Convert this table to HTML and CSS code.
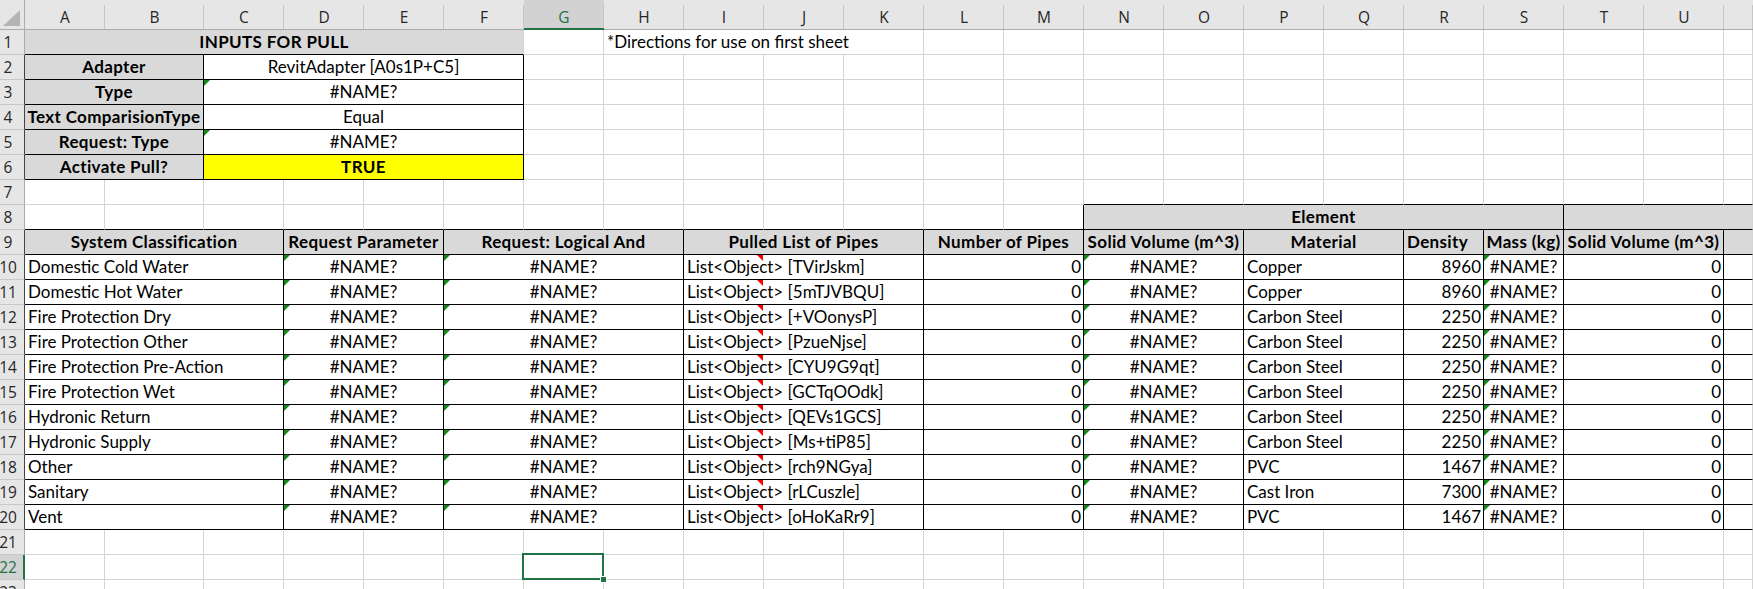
FILE: index.html
```html
<!DOCTYPE html>
<html>
<head>
<meta charset="utf-8">
<title>Sheet</title>
<link rel="stylesheet" href="styles.css">
</head>
<body>
<div class="sheet">
<!-- column headers -->
<div class="corner"></div>
<div class="ch">A</div><div class="ch">B</div><div class="ch">C</div><div class="ch">D</div><div class="ch">E</div><div class="ch">F</div><div class="ch act">G</div><div class="ch">H</div><div class="ch">I</div><div class="ch">J</div><div class="ch">K</div><div class="ch">L</div><div class="ch">M</div><div class="ch">N</div><div class="ch">O</div><div class="ch">P</div><div class="ch">Q</div><div class="ch">R</div><div class="ch">S</div><div class="ch">T</div><div class="ch">U</div><div class="ch"></div>
<!-- row 1 -->
<div class="rh">1</div>
<div class="s6 hd b bb">INPUTS FOR PULL</div>
<div></div>
<div class="s4 l">*Directions for use on first sheet</div>
<div></div><div></div><div></div><div></div><div></div><div></div><div></div><div></div><div></div><div></div>
<div></div>
<!-- row 2 -->
<div class="rh tb">2</div>
<div class="s2 hd b bk">Adapter</div>
<div class="s4 bk">RevitAdapter [A0s1P+C5]</div>
<div></div><div></div><div></div><div></div><div></div><div></div><div></div><div></div><div></div><div></div><div></div><div></div><div></div><div></div><div></div>
<div></div>
<!-- row 3 -->
<div class="rh tb">3</div>
<div class="s2 hd b bk">Type</div>
<div class="s4 bk err">#NAME?</div>
<div></div><div></div><div></div><div></div><div></div><div></div><div></div><div></div><div></div><div></div><div></div><div></div><div></div><div></div><div></div>
<div></div>
<!-- row 4 -->
<div class="rh tb">4</div>
<div class="s2 hd b bk">Text ComparisionType</div>
<div class="s4 bk">Equal</div>
<div></div><div></div><div></div><div></div><div></div><div></div><div></div><div></div><div></div><div></div><div></div><div></div><div></div><div></div><div></div>
<div></div>
<!-- row 5 -->
<div class="rh tb">5</div>
<div class="s2 hd b bk">Request: Type</div>
<div class="s4 bk err">#NAME?</div>
<div></div><div></div><div></div><div></div><div></div><div></div><div></div><div></div><div></div><div></div><div></div><div></div><div></div><div></div><div></div>
<div></div>
<!-- row 6 -->
<div class="rh tb">6</div>
<div class="s2 hd b bk">Activate Pull?</div>
<div class="s4 yl b bk">TRUE</div>
<div></div><div></div><div></div><div></div><div></div><div></div><div></div><div></div><div></div><div></div><div></div><div></div><div></div><div></div><div></div>
<div></div>
<!-- row 7 -->
<div class="rh">7</div>
<div></div><div></div><div></div><div></div><div></div><div></div><div></div><div></div><div></div><div></div><div></div><div></div><div></div>
<div class="bb"></div><div class="bb"></div><div class="bb"></div><div class="bb"></div><div class="bb"></div><div class="bb"></div><div class="bb"></div><div class="bb"></div>
<div class="bb"></div>
<!-- row 8 -->
<div class="rh">8</div>
<div class="bb"></div><div class="bb"></div><div class="bb"></div><div class="bb"></div><div class="bb"></div><div class="bb"></div><div class="bb"></div><div class="bb"></div><div class="bb"></div><div class="bb"></div><div class="bb"></div><div class="bb"></div>
<div class="bk"></div>
<div class="s6 hd b bk">Element</div>
<div class="s3 hd bb"></div>
<!-- row 9 -->
<div class="rh tb">9</div>
<div class="s3 hd b bk">System Classification</div>
<div class="s2 hd b bk">Request Parameter</div>
<div class="s3 hd b bk">Request: Logical And</div>
<div class="s3 hd b bk">Pulled List of Pipes</div>
<div class="s2 hd b bk">Number of Pipes</div>
<div class="s2 hd b bk">Solid Volume (m^3)</div>
<div class="s2 hd b bk">Material</div>
<div class="hd b bk l">Density</div>
<div class="hd b bk">Mass (kg)</div>
<div class="s2 hd b bk">Solid Volume (m^3)</div>
<div class="hd bb"></div>
<!-- row 10 -->
<div class="rh tb">10</div>
<div class="s3 l bk">Domestic Cold Water</div>
<div class="s2 bk err">#NAME?</div>
<div class="s3 bk err">#NAME?</div>
<div class="s3 l bk cmt">List&lt;Object&gt; [TVirJskm]</div>
<div class="s2 r bk">0</div>
<div class="s2 bk err">#NAME?</div>
<div class="s2 l bk">Copper</div>
<div class="r bk">8960</div>
<div class="bk err">#NAME?</div>
<div class="s2 r bk">0</div>
<div class="bb"></div>
<!-- row 11 -->
<div class="rh tb">11</div>
<div class="s3 l bk">Domestic Hot Water</div>
<div class="s2 bk err">#NAME?</div>
<div class="s3 bk err">#NAME?</div>
<div class="s3 l bk cmt">List&lt;Object&gt; [5mTJVBQU]</div>
<div class="s2 r bk">0</div>
<div class="s2 bk err">#NAME?</div>
<div class="s2 l bk">Copper</div>
<div class="r bk">8960</div>
<div class="bk err">#NAME?</div>
<div class="s2 r bk">0</div>
<div class="bb"></div>
<!-- row 12 -->
<div class="rh tb">12</div>
<div class="s3 l bk">Fire Protection Dry</div>
<div class="s2 bk err">#NAME?</div>
<div class="s3 bk err">#NAME?</div>
<div class="s3 l bk cmt">List&lt;Object&gt; [+VOonysP]</div>
<div class="s2 r bk">0</div>
<div class="s2 bk err">#NAME?</div>
<div class="s2 l bk">Carbon Steel</div>
<div class="r bk">2250</div>
<div class="bk err">#NAME?</div>
<div class="s2 r bk">0</div>
<div class="bb"></div>
<!-- row 13 -->
<div class="rh tb">13</div>
<div class="s3 l bk">Fire Protection Other</div>
<div class="s2 bk err">#NAME?</div>
<div class="s3 bk err">#NAME?</div>
<div class="s3 l bk cmt">List&lt;Object&gt; [PzueNjse]</div>
<div class="s2 r bk">0</div>
<div class="s2 bk err">#NAME?</div>
<div class="s2 l bk">Carbon Steel</div>
<div class="r bk">2250</div>
<div class="bk err">#NAME?</div>
<div class="s2 r bk">0</div>
<div class="bb"></div>
<!-- row 14 -->
<div class="rh tb">14</div>
<div class="s3 l bk">Fire Protection Pre-Action</div>
<div class="s2 bk err">#NAME?</div>
<div class="s3 bk err">#NAME?</div>
<div class="s3 l bk cmt">List&lt;Object&gt; [CYU9G9qt]</div>
<div class="s2 r bk">0</div>
<div class="s2 bk err">#NAME?</div>
<div class="s2 l bk">Carbon Steel</div>
<div class="r bk">2250</div>
<div class="bk err">#NAME?</div>
<div class="s2 r bk">0</div>
<div class="bb"></div>
<!-- row 15 -->
<div class="rh tb">15</div>
<div class="s3 l bk">Fire Protection Wet</div>
<div class="s2 bk err">#NAME?</div>
<div class="s3 bk err">#NAME?</div>
<div class="s3 l bk cmt">List&lt;Object&gt; [GCTqOOdk]</div>
<div class="s2 r bk">0</div>
<div class="s2 bk err">#NAME?</div>
<div class="s2 l bk">Carbon Steel</div>
<div class="r bk">2250</div>
<div class="bk err">#NAME?</div>
<div class="s2 r bk">0</div>
<div class="bb"></div>
<!-- row 16 -->
<div class="rh tb">16</div>
<div class="s3 l bk">Hydronic Return</div>
<div class="s2 bk err">#NAME?</div>
<div class="s3 bk err">#NAME?</div>
<div class="s3 l bk cmt">List&lt;Object&gt; [QEVs1GCS]</div>
<div class="s2 r bk">0</div>
<div class="s2 bk err">#NAME?</div>
<div class="s2 l bk">Carbon Steel</div>
<div class="r bk">2250</div>
<div class="bk err">#NAME?</div>
<div class="s2 r bk">0</div>
<div class="bb"></div>
<!-- row 17 -->
<div class="rh tb">17</div>
<div class="s3 l bk">Hydronic Supply</div>
<div class="s2 bk err">#NAME?</div>
<div class="s3 bk err">#NAME?</div>
<div class="s3 l bk cmt">List&lt;Object&gt; [Ms+tiP85]</div>
<div class="s2 r bk">0</div>
<div class="s2 bk err">#NAME?</div>
<div class="s2 l bk">Carbon Steel</div>
<div class="r bk">2250</div>
<div class="bk err">#NAME?</div>
<div class="s2 r bk">0</div>
<div class="bb"></div>
<!-- row 18 -->
<div class="rh tb">18</div>
<div class="s3 l bk">Other</div>
<div class="s2 bk err">#NAME?</div>
<div class="s3 bk err">#NAME?</div>
<div class="s3 l bk cmt">List&lt;Object&gt; [rch9NGya]</div>
<div class="s2 r bk">0</div>
<div class="s2 bk err">#NAME?</div>
<div class="s2 l bk">PVC</div>
<div class="r bk">1467</div>
<div class="bk err">#NAME?</div>
<div class="s2 r bk">0</div>
<div class="bb"></div>
<!-- row 19 -->
<div class="rh tb">19</div>
<div class="s3 l bk">Sanitary</div>
<div class="s2 bk err">#NAME?</div>
<div class="s3 bk err">#NAME?</div>
<div class="s3 l bk cmt">List&lt;Object&gt; [rLCuszle]</div>
<div class="s2 r bk">0</div>
<div class="s2 bk err">#NAME?</div>
<div class="s2 l bk">Cast Iron</div>
<div class="r bk">7300</div>
<div class="bk err">#NAME?</div>
<div class="s2 r bk">0</div>
<div class="bb"></div>
<!-- row 20 -->
<div class="rh tb">20</div>
<div class="s3 l bk">Vent</div>
<div class="s2 bk err">#NAME?</div>
<div class="s3 bk err">#NAME?</div>
<div class="s3 l bk cmt">List&lt;Object&gt; [oHoKaRr9]</div>
<div class="s2 r bk">0</div>
<div class="s2 bk err">#NAME?</div>
<div class="s2 l bk">PVC</div>
<div class="r bk">1467</div>
<div class="bk err">#NAME?</div>
<div class="s2 r bk">0</div>
<div class="bb"></div>
<!-- row 21 -->
<div class="rh">21</div>
<div></div><div></div><div></div><div></div><div></div><div></div><div></div><div></div><div></div><div></div><div></div><div></div><div></div><div></div><div></div><div></div><div></div><div></div><div></div><div></div><div></div>
<div></div>
<!-- row 22 -->
<div class="rh act">22</div>
<div></div><div></div><div></div><div></div><div></div><div></div>
<div class="sel"></div>
<div></div><div></div><div></div><div></div><div></div><div></div><div></div><div></div><div></div><div></div><div></div><div></div><div></div><div></div>
<div></div>
<!-- row 23 -->
<div class="rh">23</div>
<div></div><div></div><div></div><div></div><div></div><div></div><div></div><div></div><div></div><div></div><div></div><div></div><div></div><div></div><div></div><div></div><div></div><div></div><div></div><div></div><div></div>
<div></div>
</div>
</body>
</html>
```

FILE: styles.css
```css
html, body {
  margin: 0;
  padding: 0;
  background: #fff;
  overflow: hidden;
}
body {
  width: 1753px;
  height: 589px;
}
.sheet {
  display: grid;
  grid-template-columns: 25px 80px 99px repeat(19, 80px) 29px;
  grid-template-rows: 30px repeat(23, 25px);
  font-family: Lato, "Liberation Sans", sans-serif;
  font-size: 17px;
  color: #000;
}
.sheet > div {
  box-sizing: border-box;
  border-right: 1px solid #d4d4d4;
  border-bottom: 1px solid #d4d4d4;
  line-height: 24px;
  white-space: nowrap;
  overflow: hidden;
  position: relative;
  display: flex;
  justify-content: center;
  align-items: flex-start;
}
/* spans */
.sheet > .s2 { grid-column: span 2; }
.sheet > .s3 { grid-column: span 3; }
.sheet > .s4 { grid-column: span 4; }
.sheet > .s6 { grid-column: span 6; }
/* alignment */
.sheet > .l { justify-content: flex-start; padding-left: 3px; }
.sheet > .r { justify-content: flex-end; padding-right: 2px; }
.b { font-weight: 700; letter-spacing: 0.35px; }
.sheet > .hd { background: #d9d9d9; }
.sheet > .yl { background: #ffff00; }
/* black borders */
.sheet > .bk { border-right-color: #000; border-bottom-color: #000; }
.sheet > .bb { border-bottom-color: #000; }
/* green error indicator */
.err::before {
  content: "";
  position: absolute;
  left: 0;
  top: 0;
  width: 0;
  height: 0;
  border-top: 6px solid #138a13;
  border-right: 6px solid transparent;
}
/* red comment indicator (top right of column I) */
.cmt::after {
  content: "";
  position: absolute;
  left: 73px;
  top: 0;
  width: 0;
  height: 0;
  border-top: 6px solid #ff0000;
  border-left: 6px solid transparent;
}
/* headers */
.sheet > .corner {
  background: #e6e6e6;
  border-right-color: #ababab;
  border-bottom-color: #ababab;
}
.corner::after {
  content: "";
  position: absolute;
  right: 4px;
  bottom: 3px;
  width: 17px;
  height: 16px;
  background: #b4b4b4;
  clip-path: polygon(100% 0, 100% 100%, 0 100%);
}
.sheet > .ch {
  font-family: "Open Sans", "Noto Sans", sans-serif;
  font-size: 15.5px;
  color: #262626;
  background: linear-gradient(#c6c6c6, #c6c6c6) right bottom / 1px 24px no-repeat, #e6e6e6;
  border-right: 0;
  border-bottom-color: #ababab;
  padding-top: 5px;
}
.sheet > .ch.act {
  background: linear-gradient(#c6c6c6, #c6c6c6) right bottom / 1px 24px no-repeat, #d2d2d2;
  color: #217346;
  border-bottom: 2px solid #217346;
}
.sheet > .rh {
  font-family: "Open Sans", "Noto Sans", sans-serif;
  font-size: 15.5px;
  color: #262626;
  background: #e6e6e6;
  border-right-color: #ababab;
  border-bottom-color: #c8c8c8;
  padding-right: 8px;
  overflow: visible;
}
.sheet > .rh.tb { border-right-color: #444; }
.sheet > .rh.act {
  background: #d2d2d2;
  color: #217346;
  border-right: 2px solid #217346;
  padding-right: 7px;
}
/* selected cell */
.sheet > .sel {
  overflow: visible;
  z-index: 2;
}
.sel::before {
  content: "";
  position: absolute;
  top: -2px;
  left: -2px;
  right: -1px;
  bottom: -1px;
  border: 2px solid #217346;
}
.sel::after {
  content: "";
  position: absolute;
  right: -4px;
  bottom: -4px;
  width: 5px;
  height: 5px;
  background: #217346;
  border: 1px solid #fff;
}
```
